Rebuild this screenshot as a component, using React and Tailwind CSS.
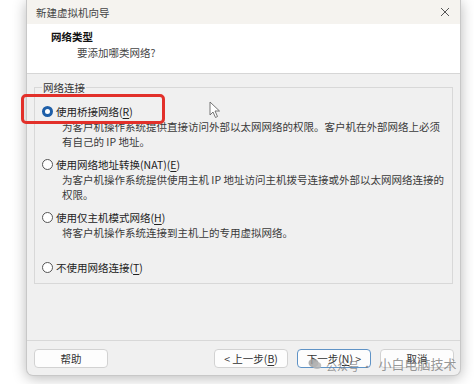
import React from "react";

const font = { fontFamily: '"Noto Sans CJK SC", "Noto Sans", sans-serif' };

function Radio({ checked }) {
  return checked ? (
    <span className="inline-block w-[11px] h-[11px] rounded-full border-[3px] border-[#1f5fa8] bg-white shrink-0" />
  ) : (
    <span className="inline-block w-[11px] h-[11px] rounded-full border border-[#555] bg-white shrink-0" />
  );
}

function Option({ checked, label, k, tail = ")", desc, className = "" }) {
  return (
    <div className={className}>
      <div className="flex items-center h-[15px] gap-[3px]">
        <Radio checked={checked} />
        <span className="text-[#222]">
          {label}(<span className="underline underline-offset-[2px]">{k}</span>{tail}
        </span>
      </div>
      {desc && desc.map((d, i) => (
        <div key={i} className="pl-[20px] h-[15px] text-[#3a3a3a] whitespace-nowrap">{d}</div>
      ))}
    </div>
  );
}

function Btn({ children, primary, className = "" }) {
  return (
    <div
      className={
        "w-[74px] h-[19px] rounded-[4px] flex items-center justify-center text-[#333] bg-[#fdfdfd] " +
        (primary ? "border-[1.5px] border-[#5f93c6]" : "border border-[#d2d2d2]") +
        " " + className
      }
    >
      {children}
    </div>
  );
}

export default function App() {
  return (
    <div className="relative w-[474px] h-[384px] bg-white overflow-hidden text-[10.5px] leading-[15px]" style={font}>
      <div className="ml-[26px] w-[435px] h-[376px] flex flex-col bg-[#f0f0f0] rounded-b-[7px] border-x border-b border-[#c8c8c8] shadow-[0_2px_14px_rgba(0,0,0,0.28)] overflow-hidden">
        {/* Title bar */}
        <div className="h-[24px] bg-[#f5f3ef] flex items-center justify-between pl-[9px] pr-[8px] shrink-0">
          <span className="text-[#444]">新建虚拟机向导</span>
          <svg width="10" height="10" viewBox="0 0 10 10" className="mr-[2px]">
            <path d="M1 1 L9 9 M9 1 L1 9" stroke="#555" strokeWidth="1" />
          </svg>
        </div>
        {/* Header */}
        <div className="h-[50px] bg-white border-b border-[#d6d6d6] shrink-0 pt-[5px]">
          <div className="pl-[24px] font-bold text-[#111] h-[16px]">网络类型</div>
          <div className="pl-[50px] text-[#444] h-[16px]">要添加哪类网络?</div>
        </div>
        {/* Body */}
        <div className="flex-1 px-[7px] pt-[13px]">
          <div className="relative border border-[#d8d8d8] h-[197px] pt-[16px] pl-[7px]">
            <span className="absolute -top-[8px] left-[7px] bg-[#f0f0f0] px-[1px] text-[#333]">网络连接</span>
            <Option
              checked
              label="使用桥接网络"
              k="R"
              desc={["为客户机操作系统提供直接访问外部以太网网络的权限。客户机在外部网络上必须", "有自己的 IP 地址。"]}
            />
            <Option
              className="mt-[8px]"
              label="使用网络地址转换(NAT)"
              k="E"
              desc={["为客户机操作系统提供使用主机 IP 地址访问主机拨号连接或外部以太网网络连接的", "权限。"]}
            />
            <Option
              className="mt-[8px]"
              label="使用仅主机模式网络"
              k="H"
              desc={["将客户机操作系统连接到主机上的专用虚拟网络。"]}
            />
            <Option className="mt-[20px]" label="不使用网络连接" k="T" />
          </div>
        </div>
        {/* Footer */}
        <div className="h-[35px] border-t border-[#d8d8d8] shrink-0 flex items-start pt-[8px] px-[7px]">
          <Btn>帮助</Btn>
          <div className="flex-1" />
          <Btn className="mr-[9px]">
            <span>&lt; 上一步(<span className="underline underline-offset-[2px]">B</span>)</span>
          </Btn>
          <Btn primary className="mr-[9px]">
            <span>下一步(<span className="underline underline-offset-[2px]">N</span>) &gt;</span>
          </Btn>
          <Btn className="mr-[-1px]">取消</Btn>
        </div>
      </div>

      {/* Red annotation box */}
      <div className="absolute left-[21px] top-[94px] w-[144px] h-[30px] rounded-[5px] border-[3px] border-[#e2302a]" />

      {/* Mouse cursor */}
      <svg className="absolute left-[209px] top-[101px]" width="12" height="18" viewBox="0 0 12 18">
        <path d="M1 1 L1 14 L4 11 L6.5 16.5 L8.5 15.5 L6 10 L10.5 10 Z" fill="white" stroke="#666" strokeWidth="0.9" strokeLinejoin="round" />
      </svg>

      {/* Watermark */}
      <div className="absolute left-[308px] top-[353px] flex items-center gap-[4px] text-[#7d7d7d]/80 pointer-events-none">
        <svg width="14" height="12" viewBox="0 0 14 12">
          <ellipse cx="5.5" cy="5" rx="5" ry="4.2" fill="#9a9a9a" opacity="0.8" />
          <ellipse cx="9" cy="7.5" rx="4.2" ry="3.5" fill="#b5b5b5" opacity="0.85" />
        </svg>
        <span className="text-[11px] mt-[6px]">公众号 ·</span>
        <span className="text-[13px] leading-[16px] ml-[2px]">小白电脑技术</span>
      </div>
    </div>
  );
}
